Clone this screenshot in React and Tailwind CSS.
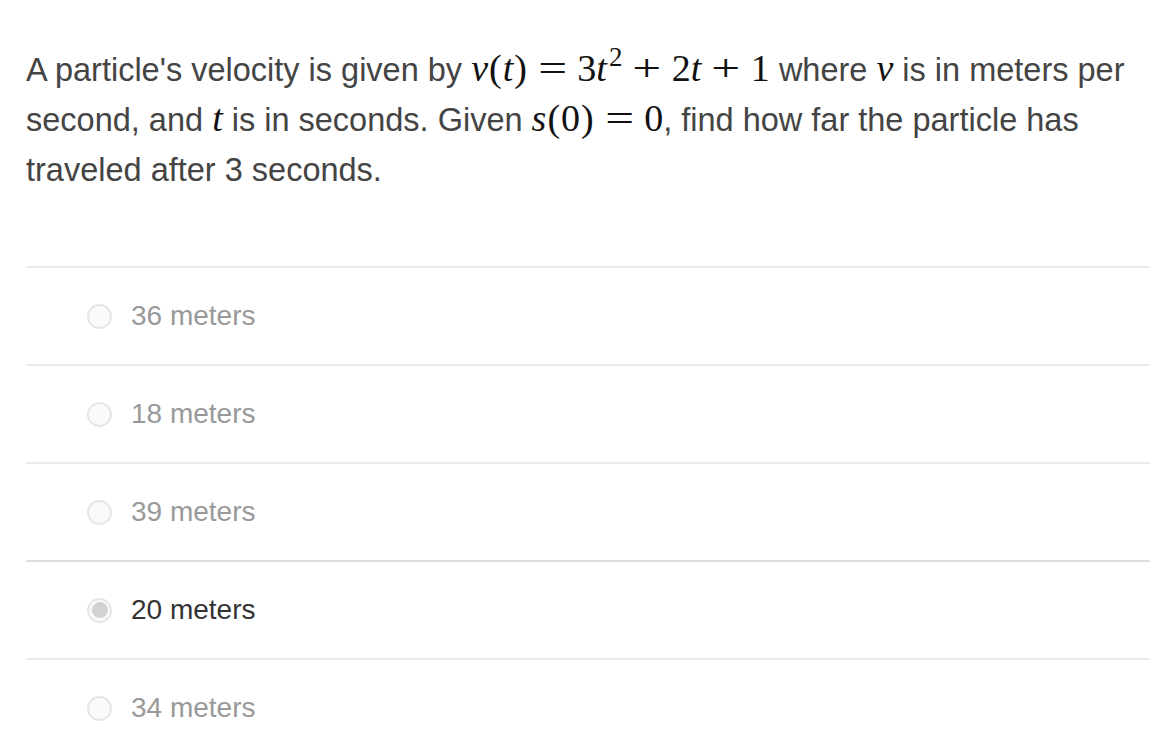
import React from 'react';

const options = [
    { label: '36 meters', selected: false },
    { label: '18 meters', selected: false },
    { label: '39 meters', selected: false },
    { label: '20 meters', selected: true },
    { label: '34 meters', selected: false },
];

const M = ({ children }) => (
    <span className="font-['Liberation_Serif','DejaVu_Serif',serif] text-[38px] leading-none text-[#111]">{children}</span>
);
const I = ({ children }) => <i className="italic">{children}</i>;
const Op = ({ children }) => <span className="inline-block mx-[14px] scale-x-[1.35]">{children}</span>;
const P = ({ children }) => <span className="mx-[1px]">{children}</span>;

const Radio = ({ selected }) => (
    <span className="w-[25px] h-[25px] rounded-full border-2 border-[#e6e6e6] bg-[#fafafa] flex items-center justify-center shrink-0">
        {selected && <span className="w-[16px] h-[16px] rounded-full bg-[#d2d2d2]"></span>}
    </span>
);

const App = () => {
    return (
        <div className="w-[1162px] h-[750px] bg-white overflow-hidden font-['Liberation_Sans',Arial,sans-serif]">
            <div className="pt-[45px] pl-[26px] pr-[12px] text-[32.5px] leading-[50px] text-[#444]">
                A particle's velocity is given by{' '}
                <M>
                    <I>v</I><P>(</P><I>t</I><P>)</P><Op>=</Op>3<I>t</I><sup className="text-[27px] relative -top-[15px] ml-[2px]">2</sup>
                    <Op>+</Op>2<I>t</I><Op>+</Op>1
                </M>{' '}
                where <M><I>v</I></M> is in meters per second, and <M><I>t</I></M> is in seconds. Given{' '}
                <M><I>s</I><P>(</P>0<P>)</P><Op>=</Op>0</M>, find how far the particle has traveled after 3 seconds.
            </div>

            <div className="mt-[71px] ml-[26px] w-[1124px]">
                {options.map((o, i) => (
                    <div
                        key={o.label}
                        className={`h-[98px] flex items-center border-t-2 ${i === 3 ? 'border-[#dcdcdc]' : 'border-[#ececec]'}`}
                    >
                        <div className="pl-[61px] flex items-center gap-[19px]">
                            <Radio selected={o.selected} />
                            <span className={`text-[28px] ${o.selected ? 'text-[#333]' : 'text-[#999]'}`}>{o.label}</span>
                        </div>
                    </div>
                ))}
            </div>
        </div>
    );
};

export default App;
